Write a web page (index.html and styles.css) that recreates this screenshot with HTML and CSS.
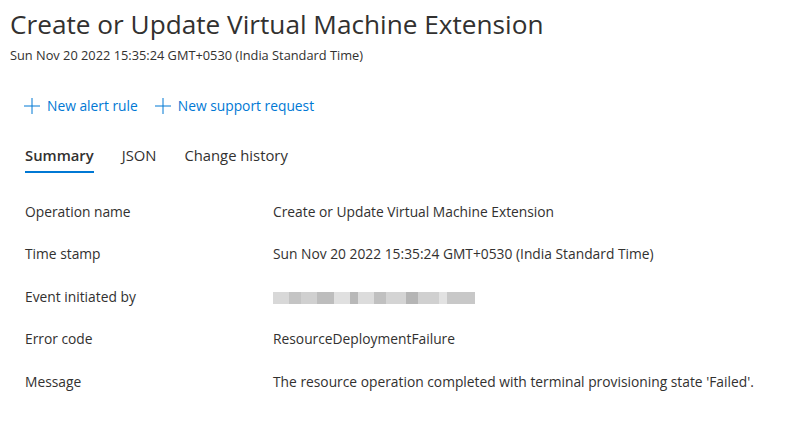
FILE: index.html
```html
<!DOCTYPE html>
<html lang="en">
<head>
  <meta charset="UTF-8" />
  <title>Activity log event</title>
  <link rel="stylesheet" href="styles.css">
</head>
<body>
  <div class="blade">
    <h1 class="title">Create or Update Virtual Machine Extension</h1>
    <div class="subtitle">Sun Nov 20 2022 15:35:24 GMT+0530 (India Standard Time)</div>

    <div class="commands">
      <a class="cmd" href="#">
        <svg class="plus" viewBox="0 0 16 16"><path d="M8 0v16M0 8h16" /></svg>
        New alert rule
      </a>
      <a class="cmd" href="#">
        <svg class="plus" viewBox="0 0 16 16"><path d="M8 0v16M0 8h16" /></svg>
        New support request
      </a>
    </div>

    <div class="tabs">
      <div class="tab active">Summary</div>
      <div class="tab">JSON</div>
      <div class="tab">Change history</div>
    </div>

    <div class="props">
      <div class="label">Operation name</div>
      <div class="value">Create or Update Virtual Machine Extension</div>

      <div class="label">Time stamp</div>
      <div class="value">Sun Nov 20 2022 15:35:24 GMT+0530 (India Standard Time)</div>

      <div class="label">Event initiated by</div>
      <div class="value"><span class="redacted"></span></div>

      <div class="label">Error code</div>
      <div class="value">ResourceDeploymentFailure</div>

      <div class="label">Message</div>
      <div class="value">The resource operation completed with terminal provisioning state 'Failed'.</div>
    </div>
  </div>
</body>
</html>
```

FILE: styles.css
```css
body {
  margin: 0;
  background: #fff;
  font-family: "Segoe UI", "Open Sans", sans-serif;
  color: #323130;
}
.blade {
  padding: 6px 10px 0 10px;
}
.title {
  margin: 0;
  font-size: 26.2px;
  font-weight: 400;
  line-height: 36px;
  color: #323130;
}
.subtitle {
  margin-top: 5px;
  font-size: 12.8px;
  line-height: 16px;
  color: #323130;
}
.commands {
  display: flex;
  gap: 17px;
  margin-top: 33px;
  padding-left: 14px;
}
.cmd {
  display: flex;
  align-items: center;
  gap: 7px;
  font-size: 13.8px;
  line-height: 20px;
  color: #0078d4;
  text-decoration: none;
}
.plus {
  width: 16px;
  height: 16px;
  fill: none;
  stroke: #0078d4;
  stroke-width: 1;
}
.tabs {
  display: flex;
  gap: 28px;
  margin-top: 29px;
  padding-left: 15px;
}
.tab {
  font-size: 14.8px;
  line-height: 20px;
  padding-bottom: 6px;
  border-bottom: 2px solid transparent;
}
.tab.active {
  font-weight: 600;
  border-bottom-color: #0078d4;
}
.props {
  display: grid;
  grid-template-columns: 248px 1fr;
  row-gap: 22.5px;
  margin-top: 28.5px;
  padding-left: 15px;
  font-size: 13.8px;
  line-height: 20px;
}
.redacted {
  display: inline-block;
  width: 202px;
  height: 12px;
  vertical-align: middle;
  background: linear-gradient(to right, #d8d8d8 0 8%, #c4c4c4 8% 14%, #d0d0d0 14% 22%, #bdbdbd 22% 30%, #e0e0e0 30% 38%, #b8b8b8 38% 42%, #dcdcdc 42% 50%, #c0c0c0 50% 56%, #d4d4d4 56% 66%, #b5b5b5 66% 72%, #d0d0d0 72% 82%, #e2e2e2 82% 86%, #c8c8c8 86% 100%);
}
```
